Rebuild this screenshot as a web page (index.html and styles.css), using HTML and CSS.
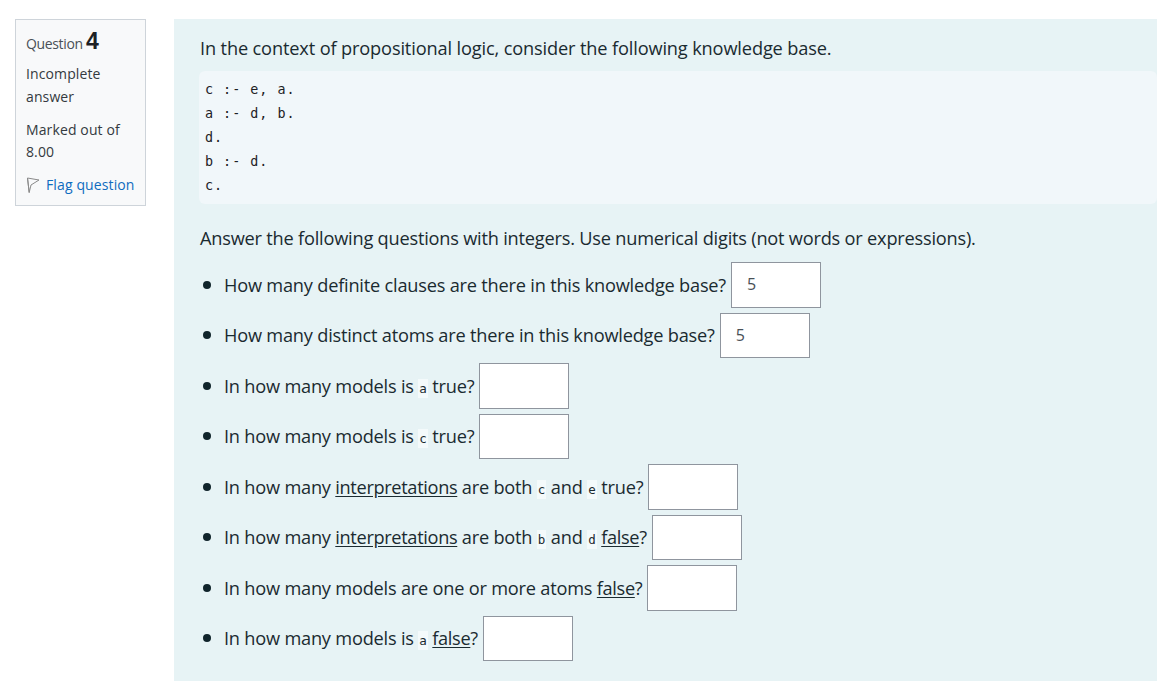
FILE: index.html
```html
<!DOCTYPE html>
<html lang="en">
<head>
<meta charset="utf-8">
<title>Question 4</title>
<link rel="stylesheet" href="styles.css">
</head>
<body>
<div class="que">
  <aside class="info">
    <h3 class="qno">Question <b>4</b></h3>
    <p class="state">Incomplete answer</p>
    <p class="grade">Marked out of 8.00</p>
    <a class="flag" href="#">
      <svg class="flag-icon" width="14" height="16" viewBox="0 0 14 16"><path d="M1.5 1 L13 3 L5 8 L3.2 15.5 Z M3.2 15.5 L1.5 1" fill="none" stroke="#8a8a8a" stroke-width="1"/></svg>
      Flag question
    </a>
  </aside>
  <main class="content">
    <p class="intro">In the context of propositional logic, consider the following knowledge base.</p>
    <pre class="kb">c :- e, a.
a :- d, b.
d.
b :- d.
c.</pre>
    <p class="lead">Answer the following questions with integers. Use numerical digits (not words or expressions).</p>
    <ul class="questions">
      <li><span>How many definite clauses are there in this knowledge base?</span><span class="answer">5</span></li>
      <li><span>How many distinct atoms are there in this knowledge base?</span><span class="answer">5</span></li>
      <li><span>In how many models is <code>a</code> true?</span><span class="answer"></span></li>
      <li><span>In how many models is <code>c</code> true?</span><span class="answer"></span></li>
      <li><span>In how many <u>interpretations</u> are both <code>c</code> and <code>e</code> true?</span><span class="answer"></span></li>
      <li><span>In how many <u>interpretations</u> are both <code>b</code> and <code>d</code> <u>false</u>?</span><span class="answer"></span></li>
      <li><span>In how many models are one or more atoms <u>false</u>?</span><span class="answer"></span></li>
      <li><span>In how many models is <code>a</code> <u>false</u>?</span><span class="answer"></span></li>
    </ul>
  </main>
</div>
</body>
</html>
```
FILE: styles.css
```css
html, body { margin: 0; height: 681px; overflow: hidden; background: #fff; }
body { font-family: "Open Sans", "Noto Sans", sans-serif; color: #1d2125; }
.que { display: flex; align-items: flex-start; gap: 28px; padding: 19px 0 0 15px; }
.info {
  flex: 0 0 131px; box-sizing: border-box; height: 187px; padding: 9px 10px 0;
  background: #f8f9fa; border: 1px solid #ced4da; font-size: 14px; line-height: 22.5px;
  letter-spacing: 0.12px;
}
.qno { margin: 0 0 7px; font-size: 14px; font-weight: 400; line-height: 24px; color: #495057; letter-spacing: -0.35px; }
.qno b { font-size: 23px; color: #1d2125; font-family: "Liberation Sans", sans-serif; letter-spacing: 0; }
.state { margin: 0 0 11px; color: #343a40; }
.grade { margin: 0 0 11px; color: #343a40; line-height: 22px; }
.flag { display: flex; align-items: center; gap: 6px; color: #0f6cbf; text-decoration: none; white-space: nowrap; }
.flag-icon { flex: none; }
.content { flex: 1; min-width: 0; height: 662px; background: #e7f3f5; padding: 17px 0 0 26px; font-size: 18.2px; letter-spacing: -0.21px; color: #1a2a30; }
.intro { margin: 0 0 11px; line-height: 24px; letter-spacing: -0.14px; }
.kb {
  margin: 0 0 22px -1px; padding: 7px 5px 7px 6px; background: #f1f7fa; border-radius: 6px;
  font: 13.4px/24px "DejaVu Sans Mono", monospace; letter-spacing: 1px; color: #1d2125; height: 119px;
}
.lead { margin: 0 0 9.6px; line-height: 24px; }
.questions { margin: 0; padding: 0 0 0 3px; list-style: none; }
.questions li { display: flex; align-items: center; height: 50.5px; white-space: pre-wrap; }
.questions li::before {
  content: ""; flex: none; width: 8px; height: 8px; margin-right: 13px; border-radius: 50%; background: #10242b;
}
.answer {
  flex: none; box-sizing: border-box; width: 90px; height: 45.5px; margin-left: 5px;
  padding-left: 15px; background: #fff; border: 1px solid #8f959e; line-height: 43.5px; color: #495057; letter-spacing: 0; font-size: 16px;
}
code { font: 12.5px "DejaVu Sans Mono", monospace; letter-spacing: 0; background: #f4fafb; padding: 2px 1px; }
u { text-underline-offset: 2px; letter-spacing: -0.34px; }
```
